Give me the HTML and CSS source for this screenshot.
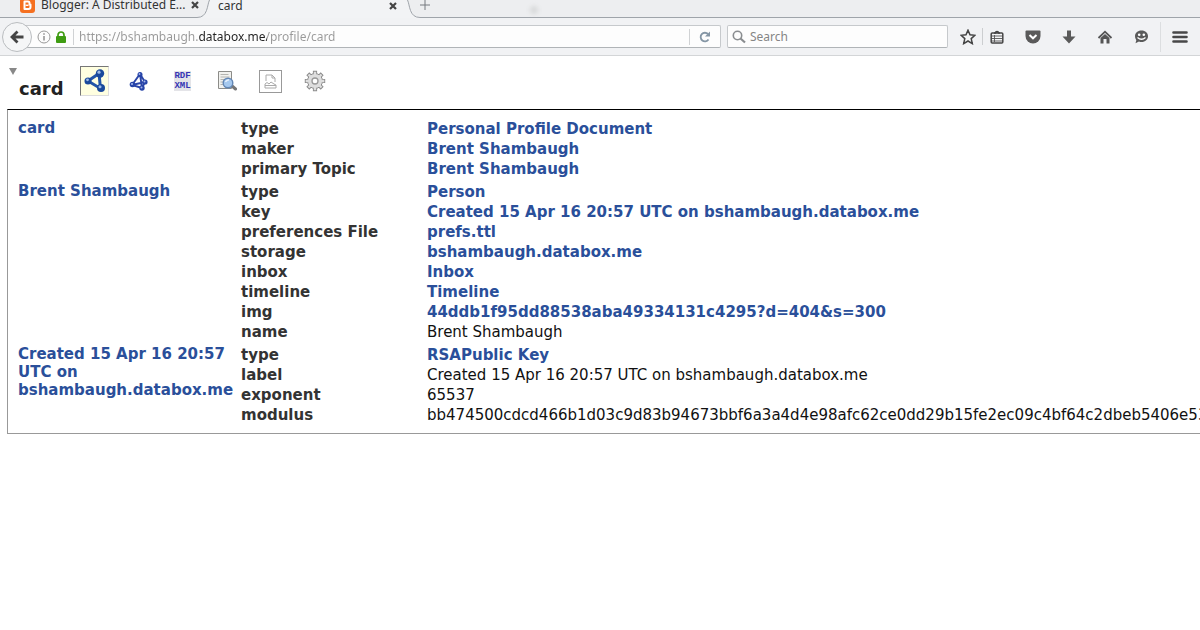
FILE: index.html
```html
<!doctype html>
<html lang="en">
<head>
    <meta charset="UTF-8">
    <meta name="viewport" content="width=device-width, initial-scale=1.0">
    <title>card</title>
    <link rel="stylesheet" href="styles.css">
</head>
<body>
    <div class="tabs">
        <button class="tab tab-back" type="button">
            <svg class="favicon" width="15" height="15" viewBox="0 0 15 15"><rect width="15" height="15" rx="3" fill="#f57020"/><path d="M4.500 3.500h3.500a1.500 1.500 0 0 1 1.500 1.500v1.500h1v2.500a2 2 0 0 1-2 2h-4z" fill="none" stroke="#fff" stroke-width="2" stroke-linejoin="round"/><path d="M5.500 7.300h3" stroke="#fff" stroke-width="1.400"/></svg>
            <span class="tab-name">Blogger: A Distributed E...</span>
            <svg class="close" width="8" height="8" viewBox="0 0 8 8"><path d="M1 1l6 6M7 1l-6 6" stroke="#444" stroke-width="2.200"/></svg>
        </button>
        <svg class="curve" width="13" height="18" viewBox="0 0 13 18"><path d="M13 0c-3 1-2 17-13 17.500V18h13z" fill="#f2f3f5"/><path d="M12.500 0C10 5 11 17.500 0 17.500" fill="none" stroke="#9fa4aa"/></svg>
        <button class="tab tab-current" type="button">
            <span class="tab-name">card</span>
            <svg class="close" width="8" height="8" viewBox="0 0 8 8"><path d="M1 1l6 6M7 1l-6 6" stroke="#444" stroke-width="2.200"/></svg>
        </button>
        <svg class="curve" width="13" height="18" viewBox="0 0 13 18"><path d="M0 0c3 1 2 17 13 17.500V18H0z" fill="#f2f3f5"/><path d="M.5 0C3 5 2 17.500 13 17.500" fill="none" stroke="#9fa4aa"/></svg>
        <div class="tabs-rest">
            <button class="new-tab" type="button" aria-label="New tab"><svg width="10" height="10" viewBox="0 0 10 10"><path d="M5 0v10M0 5h10" stroke="#777b80"/></svg></button>
            <span class="smudge"></span>
        </div>
    </div>

    <div class="toolbar">
        <button class="back" type="button" aria-label="Back"><svg width="14" height="14" viewBox="0 0 14 14"><path d="M7.500 1.500L2 7l5.500 5.500M2 7h11.500" fill="none" stroke="#444" stroke-width="2.800"/></svg></button>
        <div class="address">
            <svg width="14" height="14" viewBox="0 0 14 14"><circle cx="7" cy="7" r="6" fill="none" stroke="#999"/><path d="M7 6v4.500M7 3.200v1.600" stroke="#888" stroke-width="1.400"/></svg>
            <svg class="lock" width="10" height="12" viewBox="0 0 10 12"><rect y="5" width="10" height="7" rx="1" fill="#3f9c12"/><path d="M2 6V4a3 3 0 0 1 6 0v2" fill="none" stroke="#3f9c12" stroke-width="1.700"/></svg>
            <input class="url" type="text" aria-label="Address" value="https://bshambaugh.databox.me/profile/card">
            <button class="reload" type="button" aria-label="Reload"><svg width="12" height="12" viewBox="0 0 12 12"><path d="M9.500 8.500A4.300 4.300 0 1 1 9 3" fill="none" stroke="#8596a5" stroke-width="1.800"/><path d="M11 .5V5.500H6z" fill="#8596a5"/></svg></button>
        </div>
        <label class="search">
            <svg width="14" height="14" viewBox="0 0 14 14"><circle cx="5.500" cy="5.500" r="4.200" fill="none" stroke="#8a8d90" stroke-width="1.600"/><path d="M8.500 8.500l4.500 4" stroke="#8a8d90" stroke-width="2.200"/></svg>
            <input type="text" placeholder="Search" aria-label="Search">
        </label>
        <div class="tools">
            <button type="button" aria-label="Bookmark"><svg width="16" height="16" viewBox="0 0 16 16"><path d="M8 1.200l2 4.600 4.900.5-3.700 3.300 1.100 5L8 12l-4.300 2.600 1.100-5L1.100 6.300 6 5.800z" fill="#f4f5f6" stroke="#444" stroke-width="1.500"/></svg></button>
            <span class="line"></span>
            <button type="button" aria-label="Bookmarks list"><svg width="14" height="14" viewBox="0 0 14 14"><rect x="1.200" y="3" width="11.600" height="10" rx="1" fill="#f4f5f6" stroke="#444" stroke-width="1.500"/><path d="M4 3h1.500a1.500 1.500 0 0 1 3 0H10" fill="#555" stroke="#444" stroke-width="1.500"/><path d="M2 6h10M2 8.500h10M2 11h10M4.500 5v7" stroke="#555" stroke-width=".9"/></svg></button>
            <button type="button" aria-label="Pocket"><svg width="16" height="14" viewBox="0 0 16 14"><path d="M1.500.5h13q1 0 1 1V6a7.500 7.500 0 0 1-15 0V1.500q0-1 1-1z" fill="#5a5a5a"/><path d="M4.500 5L8 8.300 11.500 5" fill="none" stroke="#fff" stroke-width="2"/></svg></button>
            <button type="button" aria-label="Downloads"><svg width="14" height="14" viewBox="0 0 14 14"><path d="M5 .5h4v6h4.500L7 13.500.5 6.500H5z" fill="#5a5a5a"/></svg></button>
            <button type="button" aria-label="Home"><svg width="16" height="14" viewBox="0 0 16 14"><path d="M1.500 8L8 1.700 14.500 8" fill="none" stroke="#555" stroke-width="1.800"/><path d="M3.500 8L8 4l4.500 4v5.500h-3V9h-3v4.500h-3z" fill="#555"/></svg></button>
            <button type="button" aria-label="Hello"><svg width="15" height="14" viewBox="0 0 15 14"><path d="M7.500.5c4 0 6.500 2.500 6.500 5.700S11.300 12 7.500 12q-1.500 0-2.500-.5l-3.500 1.800.8-3Q1 8.500 1 6.200C1 3 3.500.5 7.500.5z" fill="#5a5a5a"/><circle cx="5.200" cy="4.800" r="1.300" fill="#fff"/><circle cx="9.800" cy="4.800" r="1.300" fill="#fff"/><path d="M3.500 7.500q4 3.500 8 0" fill="none" stroke="#fff" stroke-width="1.300"/></svg></button>
            <span class="line line-tall"></span>
            <button type="button" aria-label="Menu"><svg width="16" height="14" viewBox="0 0 16 14"><path d="M1.500 2.500h13M1.500 7h13M1.500 11.500h13" stroke="#484848" stroke-width="2.600" stroke-linecap="round"/></svg></button>
        </div>
    </div>

    <div class="header">
        <button class="collapse" type="button" aria-label="Collapse"><svg width="8" height="7" viewBox="0 0 8 7"><path d="M0 0h8L4 7z" fill="#888"/></svg></button>
        <h1>card</h1>
        <div class="panes">
            <button class="pane pane-on" type="button" aria-label="Data"><svg width="22" height="24" viewBox="0 0 22 24"><path d="M4 12L15 4.500l1.500 15z" fill="none" stroke="#2355a8" stroke-width="3"/><circle cx="4" cy="12" r="3.500" fill="#1b4a9c"/><circle cx="16" cy="4.500" r="4.200" fill="#1b4a9c"/><circle cx="17" cy="19" r="4" fill="#1b4a9c"/><circle cx="3.500" cy="10.800" r="1.400" fill="#9fbbe6"/><circle cx="15" cy="3.200" r="1.600" fill="#9fbbe6"/><circle cx="16" cy="17.700" r="1.500" fill="#9fbbe6"/></svg></button>
            <button class="pane" type="button" aria-label="Graph"><svg width="20" height="20" viewBox="0 0 20 20"><path d="M3 14l8-11 5 8-3 6zM3 14l13-3M11 3l2 14" fill="none" stroke="#2a45a8" stroke-width="1.900"/><circle cx="11" cy="3.500" r="2.500" fill="#2644a8"/><circle cx="3.500" cy="13.500" r="2.800" fill="#2644a8"/><circle cx="16" cy="11" r="2.600" fill="#2644a8"/><circle cx="13" cy="17" r="2.700" fill="#2644a8"/><circle cx="10.500" cy="3" r=".9" fill="#a4b4ec"/><circle cx="3" cy="13" r="1.100" fill="#a4b4ec"/><circle cx="15.500" cy="10.500" r="1" fill="#a4b4ec"/><circle cx="12.500" cy="16.500" r="1" fill="#a4b4ec"/></svg></button>
            <button class="pane pane-rdf" type="button"><span>RDF</span><span>XML</span></button>
            <button class="pane" type="button" aria-label="Source"><svg width="20" height="20" viewBox="0 0 20 20"><path d="M1.500.5h13v17h-13z" fill="#f1f1ee" stroke="#8c8c88"/><path d="M3.500 3.500h8M3.500 6h9M3.500 8.500h4M3.500 11h3M3.500 13.500h3" stroke="#b4b4b0"/><path d="M14.500 14.500l4 3.500" stroke="#777" stroke-width="3" stroke-linecap="round"/><circle cx="11" cy="12" r="4.800" fill="#a5c8ee" stroke="#6286b4" stroke-width="1.400"/><path d="M8.500 11q1-2.500 3.500-2" fill="none" stroke="#e5f0fc" stroke-width="1.500"/></svg></button>
            <button class="pane pane-image" type="button" aria-label="Image"><svg width="13" height="15" viewBox="0 0 13 15"><path d="M2 7V1h6l3 3v4M8 1v3h3M1 14v-4l2-1.500 2 1.500 2-2 3 2 2 1v3zM1 11.500h11" fill="none" stroke="#aaa"/></svg></button>
            <button class="pane" type="button" aria-label="Settings"><svg width="22" height="22" viewBox="0 0 22 22"><path d="M11 .8v20.400M.8 11h20.400M3.800 3.800l14.400 14.400M18.200 3.800L3.800 18.200" stroke="#8c8c8c" stroke-width="4.200"/><circle cx="11" cy="11" r="7.500" fill="#dedede" stroke="#8c8c8c"/><path d="M11 1.700v18.600M1.700 11h18.600M4.500 4.500l13 13M17.500 4.500l-13 13" stroke="#dedede" stroke-width="2.400"/><circle cx="11" cy="11" r="3" fill="#fff" stroke="#999" stroke-width="1.300"/></svg></button>
        </div>
    </div>

    <div class="content">
        <table>
            <colgroup><col class="col-subject"><col class="col-name"><col></colgroup>
            <tbody>
                <tr><td class="subject" rowspan="3"><a href="#">card</a></td><th scope="row">type</th><td><a href="#">Personal Profile Document</a></td></tr>
                <tr><th scope="row">maker</th><td><a href="#">Brent Shambaugh</a></td></tr>
                <tr class="last"><th scope="row">primary Topic</th><td><a href="#">Brent Shambaugh</a></td></tr>
            </tbody>
            <tbody>
                <tr><td class="subject" rowspan="8"><a href="#">Brent Shambaugh</a></td><th scope="row">type</th><td><a href="#">Person</a></td></tr>
                <tr><th scope="row">key</th><td><a href="#">Created 15 Apr 16 20:57 UTC on bshambaugh.databox.me</a></td></tr>
                <tr><th scope="row">preferences File</th><td><a href="#">prefs.ttl</a></td></tr>
                <tr><th scope="row">storage</th><td><a href="#">bshambaugh.databox.me</a></td></tr>
                <tr><th scope="row">inbox</th><td><a href="#">Inbox</a></td></tr>
                <tr><th scope="row">timeline</th><td><a href="#">Timeline</a></td></tr>
                <tr><th scope="row">img</th><td><a href="#">44ddb1f95dd88538aba49334131c4295?d=404&amp;s=300</a></td></tr>
                <tr class="last"><th scope="row">name</th><td>Brent Shambaugh</td></tr>
            </tbody>
            <tbody>
                <tr><td class="subject" rowspan="4"><a href="#">Created 15 Apr 16 20:57 UTC on bshambaugh.databox.me</a></td><th scope="row">type</th><td><a href="#">RSAPublic Key</a></td></tr>
                <tr><th scope="row">label</th><td>Created 15 Apr 16 20:57 UTC on bshambaugh.databox.me</td></tr>
                <tr><th scope="row">exponent</th><td>65537</td></tr>
                <tr><th scope="row">modulus</th><td>bb474500cdcd466b1d03c9d83b94673bbf6a3a4d4e98afc62ce0dd29b15fe2ec09c4bf64c2dbeb5406e53</td></tr>
            </tbody>
        </table>
    </div>
</body>
</html>
```
FILE: styles.css
```css
*{
    box-sizing: border-box;
    padding: 0;
    margin: 0;
}
body{
    background: #fff;
    color: #111;
    font-family: "DejaVu Sans", sans-serif;
    font-size: 15px;
    overflow-x: hidden;
}
button,
input{
    border: 0;
    background: none;
    font: inherit;
    color: inherit;
    outline: none;
}
svg{
    display: block;
    flex-shrink: 0;
}

/* tabs */
.tabs{
    display: flex;
    height: 18px;
    overflow: hidden;
    background: #edeef0;
    font-family: "Noto Sans", sans-serif;
    font-size: 12px;
    line-height: 16px;
    color: #333;
}
.tab{
    display: flex;
    align-items: center;
    padding-bottom: 7px;
    white-space: nowrap;
}
.tab-back{
    width: 197px;
    gap: 6px;
    padding-left: 20px;
    border-bottom: 1px solid #9fa4aa;
}
.tab-current{
    width: 197px;
    padding-left: 8px;
    background: #f2f3f5;
}
.close{
    margin-left: auto;
    margin-right: 10px;
}
.tab-back .close{
    margin-right: -2px;
}
.tabs-rest{
    display: flex;
    flex: 1;
    border-bottom: 1px solid #9fa4aa;
}
.new-tab{
    padding: 0 0 7px;
}
.smudge{
    width: 8px;
    height: 8px;
    margin: 6px 0 0 100px;
    border-radius: 50%;
    background: #d8d9da;
    filter: blur(2px);
}

/* toolbar */
.toolbar{
    display: flex;
    align-items: center;
    height: 38px;
    padding: 0 12px 0 2px;
    background: #f1f2f4;
    border-bottom: 1px solid #d3d5d7;
    font-family: "Noto Sans", sans-serif;
    font-size: 12px;
    color: #333;
}
.back{
    z-index: 1;
    display: flex;
    align-items: center;
    justify-content: center;
    flex-shrink: 0;
    width: 30px;
    height: 30px;
    border: 1px solid #babdc0;
    border-radius: 50%;
    background: #f5f6f7;
}
.address,
.search{
    display: flex;
    align-items: center;
    height: 23px;
    border: 1px solid #c6c9cc;
    border-bottom-color: #b0b4b7;
    border-radius: 2px;
    background: #fdfdfd;
}
.address{
    flex: 1;
    gap: 5px;
    margin-left: -15px;
    padding-left: 19px;
}
.lock{
    margin-right: 2px;
}
.url{
    flex: 1;
    min-width: 0;
    height: 16px;
    padding-left: 5px;
    border-left: 1px solid #d0d2d4;
    background: linear-gradient(to right, #999 125px, #222 125px, #222 193px, #999 193px);
    -webkit-background-clip: text;
    background-clip: text;
    color: transparent;
}
.reload{
    height: 16px;
    padding: 0 9px;
    border-left: 1px solid #d0d2d4;
}
.search{
    width: 221px;
    gap: 4px;
    margin-left: 6px;
    padding-left: 4px;
}
.search input{
    flex: 1;
    min-width: 0;
}
.search input::placeholder{
    color: #858585;
    opacity: 1;
}
.tools{
    display: flex;
    align-items: center;
    gap: 20px;
    padding-left: 12px;
}
.tools button{
    display: flex;
    justify-content: center;
    width: 16px;
}
.line{
    width: 1px;
    height: 17px;
    margin: 0 -14px;
    background: #ccced0;
}
.line-tall{
    height: 30px;
    margin: 0 -9px;
    background: #dcdee0;
}

/* header */
.header{
    display: flex;
    align-items: flex-start;
    padding: 10px 9px;
}
.collapse{
    margin-top: 2px;
}
h1{
    margin: 13px 0 0 2px;
    font-size: 18px;
    line-height: 20px;
    color: #222;
}
.panes{
    display: grid;
    grid-template-columns: repeat(6, 44px);
    align-items: center;
    justify-items: center;
    height: 30px;
    margin-left: 9px;
}
.pane{
    display: flex;
    align-items: center;
    justify-content: center;
}
.pane-on{
    width: 29px;
    height: 30px;
    border: 1px solid #777;
    border-right-color: #ddd;
    border-bottom-color: #ddd;
    background: #ffffe0;
}
.pane-rdf{
    flex-direction: column;
    background: #e4e4e8;
    font-family: "Liberation Mono", monospace;
    font-size: 9px;
    font-weight: bold;
    line-height: 10px;
    color: #3434b4;
}
.pane-image{
    width: 23px;
    height: 23px;
    border: 1px solid #999;
}

/* property table */
.content{
    margin-left: 7px;
    padding: 9px 0 8px 7px;
    border: 1px solid #999;
    border-top-color: #000;
    border-right: 0;
    overflow: hidden;
}
table{
    width: 100%;
    table-layout: fixed;
    border-collapse: collapse;
    white-space: nowrap;
}
.col-subject{
    width: 223px;
}
.col-name{
    width: 186px;
}
th,
td{
    padding: 0 3px;
    line-height: 20px;
    text-align: left;
    vertical-align: top;
}
th{
    color: #333;
}
.last th,
.last td{
    padding-bottom: 3px;
}
.subject{
    line-height: 18px;
    white-space: normal;
}
a{
    color: #2a4f9a;
    font-weight: bold;
    text-decoration: none;
}
```
